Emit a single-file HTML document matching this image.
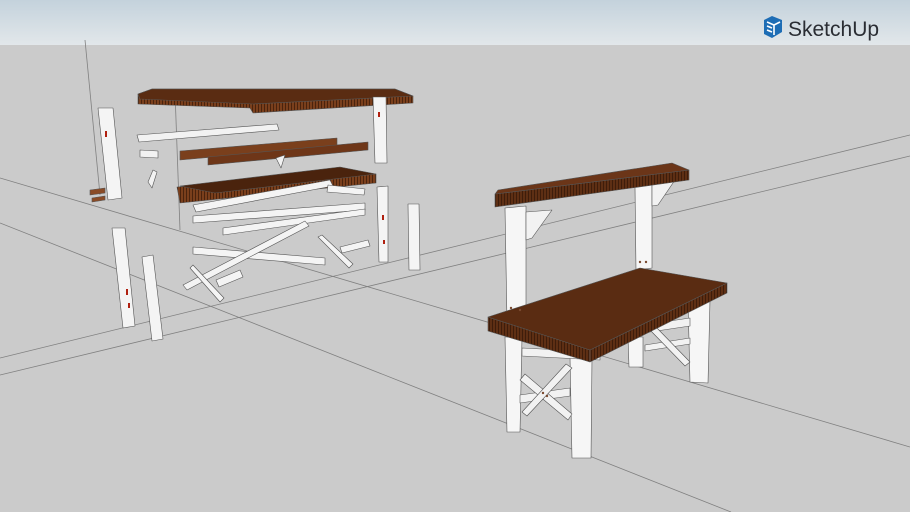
<!DOCTYPE html>
<html><head><meta charset="utf-8"><style>
html,body{margin:0;padding:0;width:910px;height:512px;overflow:hidden;}
svg{display:block}
</style></head><body>
<svg width="910" height="512" viewBox="0 0 910 512" xmlns="http://www.w3.org/2000/svg">
<defs>
<linearGradient id="sky" x1="0" y1="0" x2="0" y2="1">
<stop offset="0" stop-color="#c4d2dc"/><stop offset="1" stop-color="#e2e7ea"/></linearGradient>
<pattern id="slat" width="3" height="10" patternUnits="userSpaceOnUse"><rect width="3" height="10" fill="#5e2f14"/><rect width="1" height="10" fill="#3e1d0b"/></pattern>
<pattern id="slatv" width="3" height="20" patternUnits="userSpaceOnUse"><rect width="3" height="20" fill="#7a3f1c"/><rect width="1" height="20" fill="#4a230d"/></pattern>
</defs>
<rect width="910" height="45" fill="url(#sky)"/>
<rect y="45" width="910" height="467" fill="#cbcbcb"/>
<g stroke="#808080" stroke-width="0.8" fill="none">
<line x1="0" y1="178" x2="910" y2="447"/>
<line x1="0" y1="223" x2="731" y2="512"/>
<line x1="0" y1="358" x2="910" y2="135"/>
<line x1="0" y1="375" x2="910" y2="156"/>
<line x1="85" y1="40" x2="100" y2="195"/>
<line x1="175" y1="92" x2="180" y2="230"/>
</g>
<!-- sketchup logo -->
<g transform="translate(761,16)">
<path d="M3 4 L11 0 L21 4 L21 16 L11 22 L3 18 Z" fill="#1d6db5"/>
<path d="M6 6 L13 9 L13 19 M6 10 L11 12 M6 14 L11 16 M13 9 L19 6" stroke="#fff" stroke-width="1.6" fill="none"/>
</g>
<text x="788" y="36" font-family="Liberation Sans, sans-serif" font-size="21" fill="#2a2d33">SketchUp</text>

<g stroke="#555" stroke-width="0.6" stroke-linejoin="round">
<polygon points="138,94 152,89 395,89 413,96 413,103 253,113 250,108 138,104" fill="url(#slatv)"/>
<polygon points="138,94 152,89 395,89 413,96 253,104 140,99" fill="#5a2c12"/>
<polygon points="98,108 113,108 122,198 108,200" fill="#f4f4f4"/>
<polygon points="90,190 105,188 105,193 90,195" fill="#8a4b26"/>
<polygon points="92,198 105,196 105,200 92,202" fill="#8a4b26"/>
<polygon points="373,97 386,97 387,163 375,163" fill="#f4f4f4"/>
<polygon points="137,135 277,124 279,130 139,142" fill="#f2f2f2"/>
<polygon points="140,150 158,151 158,158 140,157" fill="#f2f2f2"/>
<polygon points="180,151 337,138 337,146 180,160" fill="#7a3f1c"/>
<polygon points="208,157 368,142 368,150 208,165" fill="#6e3618"/>
<polygon points="148,182 153,170 157,172 152,188" fill="#f2f2f2"/>
<polygon points="276,158 285,155 281,168" fill="#f2f2f2"/>
<polygon points="177,187 376,174 376,183 180,203" fill="url(#slatv)"/>
<polygon points="180,186 340,167 376,174 215,193" fill="#4a230d"/>
<polygon points="193,205 330,180 333,186 196,212" fill="#f4f4f4"/>
<polygon points="193,216 365,203 365,210 193,223" fill="#f4f4f4"/>
<polygon points="223,228 365,209 365,215 223,235" fill="#f4f4f4"/>
<polygon points="328,185 365,189 364,195 327,192" fill="#f4f4f4"/>
<polygon points="193,247 325,258 325,265 193,254" fill="#f4f4f4"/>
<polygon points="183,285 305,221 309,226 187,290" fill="#f4f4f4"/>
<polygon points="190,268 193,265 224,298 220,302" fill="#f4f4f4"/>
<polygon points="216,280 240,270 243,277 219,287" fill="#f4f4f4"/>
<polygon points="318,237 322,235 353,264 349,268" fill="#f4f4f4"/>
<polygon points="340,247 368,240 370,246 342,253" fill="#f4f4f4"/>
<polygon points="112,228 125,228 135,326 123,328" fill="#f4f4f4"/>
<polygon points="142,257 153,255 163,339 152,341" fill="#f4f4f4"/>
<polygon points="377,187 388,186 388,262 379,262" fill="#f4f4f4"/>
<polygon points="408,204 419,204 420,270 409,270" fill="#f4f4f4"/>
</g>
<g fill="#b02010">
<rect x="105" y="131" width="2" height="6"/><rect x="126" y="289" width="2" height="6"/><rect x="128" y="303" width="2" height="5"/>
<rect x="382" y="215" width="2" height="5"/><rect x="383" y="240" width="2" height="4"/><rect x="378" y="112" width="2" height="5"/>
</g>

<g stroke="#555" stroke-width="0.6" stroke-linejoin="round">
<polygon points="688,300 710,300 708,383 690,382" fill="#f6f6f6"/>
<polygon points="628,337 643,337 643,367 629,367" fill="#f6f6f6"/>
<polygon points="643,325 690,318 690,326 643,333" fill="#f2f2f2"/>
<polygon points="645,345 690,338 690,344 645,351" fill="#f2f2f2"/>
<polygon points="650,330 655,326 690,362 685,366" fill="#f2f2f2"/>
<polygon points="505,208 526,206 526,320 507,322" fill="#f6f6f6"/>
<polygon points="635,187 652,185 652,268 636,270" fill="#f6f6f6"/>
<polygon points="526,212 552,210 532,238 526,240" fill="#f2f2f2"/>
<polygon points="652,184 675,180 658,205 652,206" fill="#f2f2f2"/>
<polygon points="495,194 689,170 689,180 495,207" fill="url(#slat)"/>
<polygon points="498,190 672,163 689,170 495,194" fill="#6b3518"/>
<polygon points="505,337 522,337 520,432 507,432" fill="#f6f6f6"/>
<polygon points="570,357 592,357 591,458 572,458" fill="#f6f6f6"/>
<polygon points="522,348 600,352 600,360 522,356" fill="#f2f2f2"/>
<polygon points="520,395 570,388 570,396 520,403" fill="#f2f2f2"/>
<polygon points="520,380 525,374 572,414 568,420" fill="#f2f2f2"/>
<polygon points="522,412 566,364 572,368 527,416" fill="#f2f2f2"/>
<polygon points="488,317 590,350 590,362 488,331" fill="url(#slat)"/>
<polygon points="590,350 727,283 727,293 590,362" fill="url(#slat)"/>
<polygon points="488,317 640,268 727,283 590,350" fill="#5a2c12"/>
</g>
<g fill="#7a4a30"><circle cx="511" cy="308" r="1.2"/><circle cx="520" cy="310" r="1.2"/><circle cx="640" cy="262" r="1.2"/><circle cx="646" cy="262" r="1.2"/><circle cx="543" cy="393" r="1.2"/><circle cx="547" cy="396" r="1.2"/></g>
</svg>
</body></html>
